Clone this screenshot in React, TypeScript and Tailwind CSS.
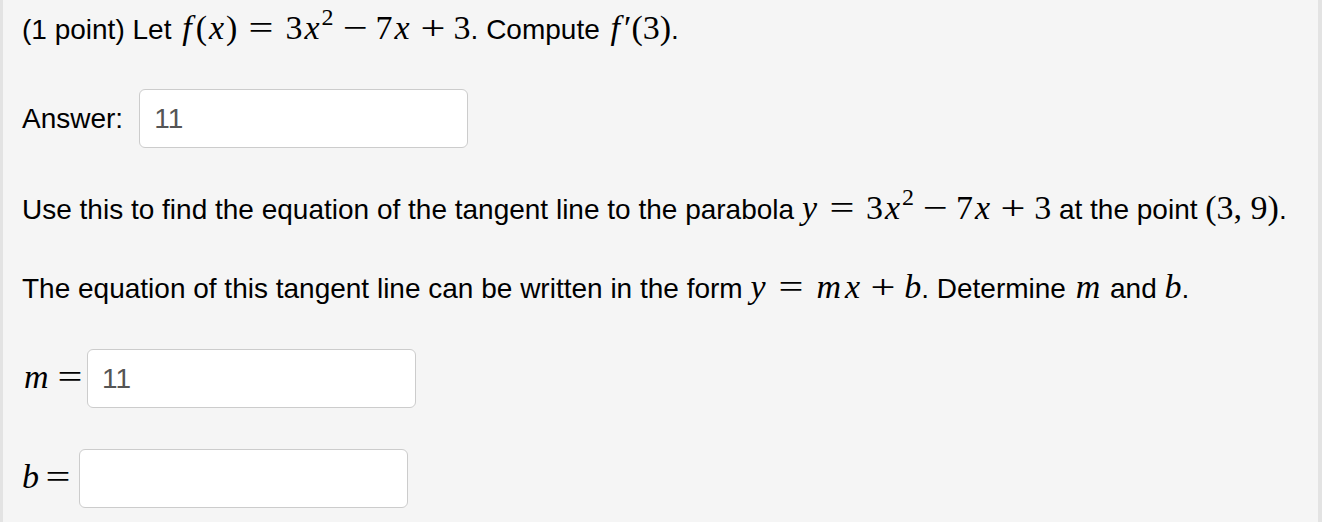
import React from 'react';

const M: React.FC<{ children: React.ReactNode; className?: string }> = ({ children, className }) => (
  <span className={`font-['Liberation_Serif',serif] text-[34px] whitespace-nowrap ${className ?? 'leading-[0]'}`}>{children}</span>
);

// italic variables, padded to the wider TeX advance widths
const pads: Record<string, string> = {
  f: 'pl-[3px] pr-[4px]',
  x: 'px-[2px]',
  y: 'pr-[1px]',
  m: 'px-[2px]',
  b: '',
};

const V: React.FC<{ c: string }> = ({ c }) => <i className={`inline-block italic ${pads[c] ?? ''}`}>{c}</i>;

// TeX-style operators are wider than the Times glyphs, so stretch them a bit
const Rel: React.FC<{ children: React.ReactNode }> = ({ children }) => (
  <span className="inline-block w-[26px] mx-[11px] text-center scale-x-[1.3]">{children}</span>
);
const Bin: React.FC<{ children: React.ReactNode }> = ({ children }) => (
  <span className="inline-block w-[26px] mx-[8px] text-center scale-x-[1.3]">{children}</span>
);

const Sq = () => <span className="text-[24px] relative -top-[14px]">2</span>;

const Box: React.FC<{ value?: string }> = ({ value }) => (
  <input
    readOnly
    value={value ?? ''}
    className="w-[329px] h-[59px] shrink-0 rounded-[6px] border border-[#cccccc] bg-white px-[14px] text-[28px] text-[#555555] font-['Liberation_Sans',Arial,sans-serif] outline-none"
  />
);

const Label: React.FC<{ c: string; w: string }> = ({ c, w }) => (
  <div className={`${w} shrink-0`}>
    <M className="leading-none">
      <V c={c} />
      <span className="inline-block w-[24px] ml-[7px] text-center scale-x-[1.3]">=</span>
    </M>
  </div>
);

export default function App() {
  return (
    <div className="h-[522px] bg-[#f5f5f5] border-l-[3px] border-r-[4px] border-[#e3e3e3] pl-[19px] pt-[15px] text-[28px] text-black font-['Liberation_Sans',Arial,sans-serif]">
      <p className="h-[30px] leading-[30px] whitespace-nowrap">
        (1 point) Let{' '}
        <M>
          <V c="f" />(<V c="x" />)<Rel>=</Rel>3<V c="x" />
          <Sq />
          <Bin>−</Bin>7<V c="x" />
          <Bin>+</Bin>3
        </M>
        . Compute{' '}
        <M>
          <V c="f" />′(3)
        </M>
        .
      </p>

      <div className="mt-[44px] flex items-center gap-[16px]">
        <span>Answer:</span>
        <Box value="11" />
      </div>

      <p className="mt-[48px] h-[30px] leading-[28px] whitespace-nowrap">
        Use this to find the equation of the tangent line to the parabola{' '}
        <M>
          <V c="y" />
          <Rel>=</Rel>3<V c="x" />
          <Sq />
          <Bin>−</Bin>7<V c="x" />
          <Bin>+</Bin>3
        </M>{' '}
        at the point{' '}
        <M>(3, 9)</M>.
      </p>

      <p className="mt-[49px] h-[30px] leading-[28px] whitespace-nowrap">
        The equation of this tangent line can be written in the form{' '}
        <M>
          <V c="y" />
          <Rel>=</Rel>
          <V c="m" />
          <V c="x" />
          <Bin>+</Bin>
          <V c="b" />
        </M>
        . Determine{' '}
        <M>
          <V c="m" />
        </M>{' '}
        and{' '}
        <M>
          <V c="b" />
        </M>
        .
      </p>

      <div className="mt-[44px] flex items-center">
        <Label c="m" w="w-[65px]" />
        <Box value="11" />
      </div>

      <div className="mt-[41px] flex items-center">
        <Label c="b" w="w-[57px]" />
        <Box />
      </div>
    </div>
  );
}
